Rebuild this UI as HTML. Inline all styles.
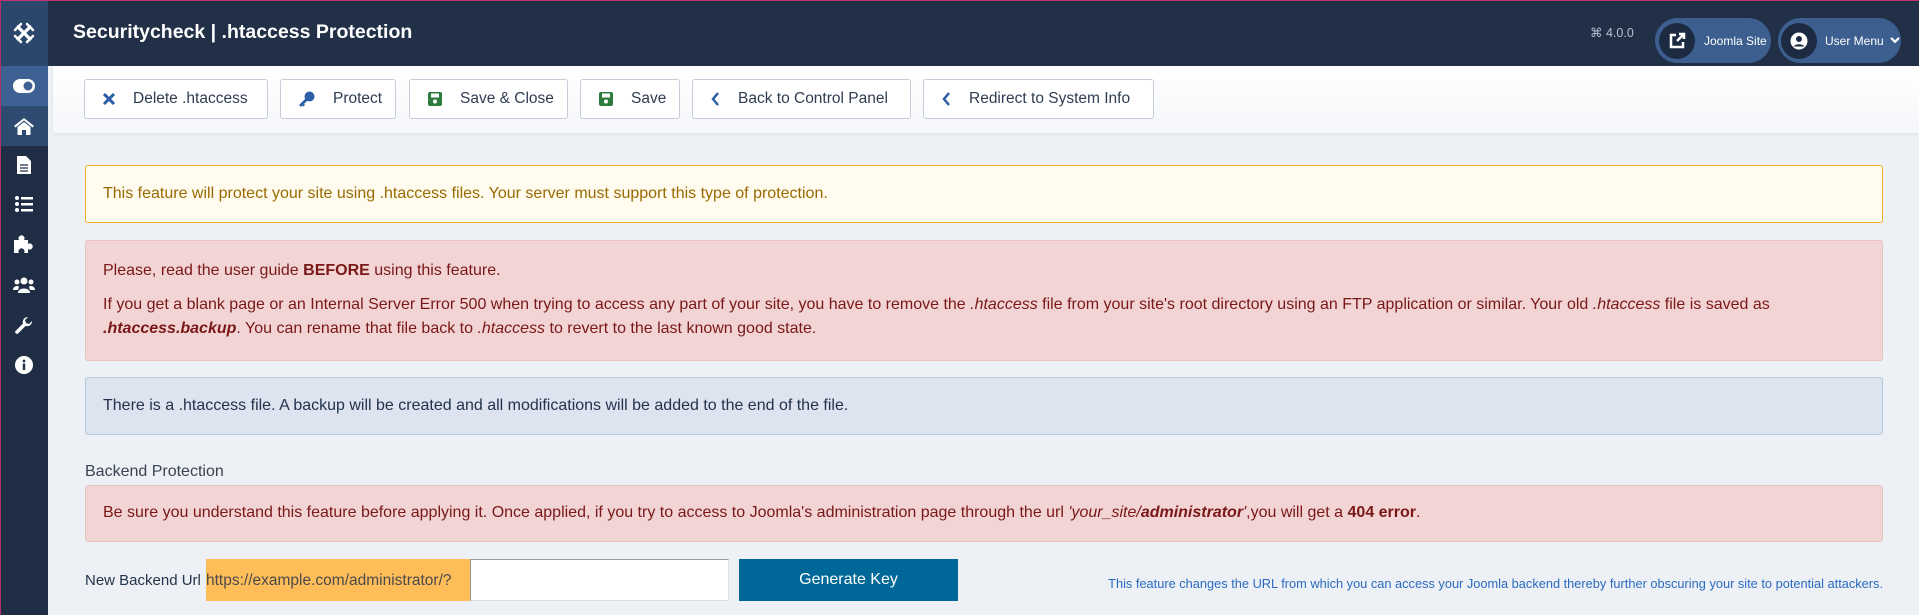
<!DOCTYPE html>
<html><head><meta charset="utf-8">
<style>
*{box-sizing:border-box;margin:0;padding:0}
body{width:1919px;height:615px;overflow:hidden;background:#edf1f6;font-family:"Liberation Sans",sans-serif;position:relative;color:#22334b}
.topline{position:absolute;left:0;top:0;width:1919px;height:1px;background:#c2326d;z-index:5}
.leftline{position:absolute;left:0;top:0;width:1px;height:615px;background:#b0306a;z-index:5}
.header{position:absolute;left:0;top:0;width:1919px;height:66px;background:#212f47}
.logo{position:absolute;left:0;top:0;width:48px;height:66px;background:#2c476c}
.title{position:absolute;left:73px;top:21px;color:#fff;font-size:19.5px;font-weight:bold}
.side{position:absolute;left:0;top:66px;width:48px;height:549px;background:#1f2d45}
.srow{position:absolute;left:0;width:48px;height:40px;display:flex;align-items:center;justify-content:center}
.toolbar{position:absolute;left:53px;top:66px;width:1866px;height:67px;background:linear-gradient(#fff,#f5f7fa);box-shadow:0 2px 4px rgba(0,0,0,.05)}
.btn{position:absolute;top:79px;height:40px;background:#fff;border:1px solid #c6cdd8;border-radius:3px;font-size:15.5px;color:#2f3d52;display:flex;align-items:center;padding-left:18px;white-space:nowrap}
.btn svg{margin-right:18px}
.box{position:absolute;left:85px;width:1798px;border:1px solid;border-radius:3px;font-size:16px}
.pill{position:absolute;top:18px;height:45px;border-radius:23px;background:#3c5f90;color:#fff;font-size:12px;display:flex;align-items:center;white-space:nowrap}
.pill .ic{width:36px;height:36px;border-radius:50%;background:#1d2b42;margin-left:4px;margin-right:9px;display:flex;align-items:center;justify-content:center}
</style></head><body>
<div class="header"></div>
<div class="logo"><svg style="position:absolute;left:12px;top:21px" width="24" height="24" viewBox="0 0 24 24" fill="none" stroke="#fff" stroke-width="3.2" stroke-linecap="round"><path d="M6 6 L18 18 M18 6 L6 18"/><path d="M3 9 L9 3 M15 3 L21 9 M21 15 L15 21 M9 21 L3 15" stroke-width="2.5"/></svg></div>
<div class="title">Securitycheck | .htaccess Protection</div>
<div style="position:absolute;left:1590px;top:25px;color:#b8c2d2;font-size:12.5px;white-space:nowrap">&#x2318; 4.0.0</div>
<div class="pill" style="left:1655px;width:116px"><div class="ic"><svg width="18" height="18" viewBox="0 0 18 18" fill="none" stroke="#fff" stroke-width="2.5"><path d="M8 3H3v12h12v-5"/><path d="M9 9l7-7M11 2h5v5"/></svg></div>Joomla Site</div>
<div class="pill" style="left:1778px;width:123px"><div class="ic" style="margin-left:3px;margin-right:8px"><svg width="18" height="18" viewBox="0 0 18 18"><circle cx="9" cy="9" r="8.5" fill="#fff"/><circle cx="9" cy="7" r="3" fill="#1d2b42"/><path d="M3.5 14.5c2-3 9-3 11 0" fill="#1d2b42"/></svg></div>User Menu<svg style="margin-left:6px" width="10" height="7" viewBox="0 0 11 8" fill="none" stroke="#fff" stroke-width="2.5"><path d="M1 1l4.5 4.5L10 1"/></svg></div>
<div class="side">
<div class="srow" style="top:0;background:#3e6194"><svg width="22" height="14"><rect x="0" y="0" width="22" height="14" rx="7" fill="#fff"/><circle cx="15" cy="7" r="4.5" fill="#3e6194"/></svg></div>
<div class="srow" style="top:40px;background:#2d4a70"><svg width="20" height="18" viewBox="0 0 20 18" fill="#fff"><path d="M10 1L0 9l1.5 1.5L10 3.5l8.5 7L20 9z"/><path d="M3.5 10L10 5l6.5 5v8h-4.5v-5h-4v5h-4.5z"/></svg></div>
<div class="srow" style="top:79px"><svg width="14" height="18" viewBox="0 0 14 18" fill="#fff"><path d="M0 0h9l5 5v13H0z"/><path d="M3 9h8M3 12h8M3 15h8" stroke="#1f2d45" stroke-width="1.3"/></svg></div>
<div class="srow" style="top:118px"><svg width="18" height="16" viewBox="0 0 18 16" fill="#fff"><circle cx="2" cy="2" r="2"/><circle cx="2" cy="8" r="2"/><circle cx="2" cy="14" r="2"/><rect x="6" y="1" width="12" height="2.5"/><rect x="6" y="7" width="12" height="2.5"/><rect x="6" y="13" width="12" height="2.5"/></svg></div>
<div class="srow" style="top:158px"><svg width="20" height="18" viewBox="0 0 20 18" fill="#fff"><path d="M0 5h5a3 3 0 1 1 5 0h4v4a3 3 0 1 1 0 5v4H10a3 3 0 1 0-5 0H0z"/></svg></div>
<div class="srow" style="top:199px"><svg width="22" height="16" viewBox="0 0 22 16" fill="#fff"><circle cx="11" cy="4" r="3.5"/><circle cx="4" cy="5" r="2.5"/><circle cx="18" cy="5" r="2.5"/><path d="M5 16c0-6 12-6 12 0z"/><path d="M0 13c0-4 5-5 6-3l-1 3z M22 13c0-4-5-5-6-3l1 3z"/></svg></div>
<div class="srow" style="top:240px"><svg width="18" height="18" viewBox="0 0 18 18" fill="#fff"><path d="M17 4a5 5 0 0 1-6.5 5L3 16.5A1.8 1.8 0 0 1 .5 14L8 6.5A5 5 0 0 1 13 0l-3 3 1 3 3 1z"/></svg></div>
<div class="srow" style="top:279px"><svg width="18" height="18" viewBox="0 0 18 18"><circle cx="9" cy="9" r="9" fill="#fff"/><rect x="7.8" y="7.5" width="2.4" height="6.5" fill="#1f2d45"/><circle cx="9" cy="5" r="1.4" fill="#1f2d45"/></svg></div>
</div>
<div class="toolbar"></div>
<div class="btn" style="left:84px;width:184px"><svg width="12" height="12" viewBox="0 0 12 12" stroke="#2d5fa8" stroke-width="3"><path d="M1 1l10 10M11 1L1 11"/></svg>Delete .htaccess</div>
<div class="btn" style="left:280px;width:116px"><svg width="16" height="16" viewBox="0 0 16 16" fill="#2d5fa8"><circle cx="10.5" cy="5.5" r="5"/><path d="M7 7L0 14l2 2 1.5-1.5 1 1 1.5-1.5-1-1L9 9z"/></svg>Protect</div>
<div class="btn" style="left:409px;width:159px"><svg width="14" height="14" viewBox="0 0 14 14"><rect width="14" height="14" rx="2" fill="#2f7d3e"/><rect x="3" y="1.5" width="8" height="4" fill="#fff"/><circle cx="7" cy="9.5" r="2" fill="#fff"/></svg>Save &amp; Close</div>
<div class="btn" style="left:580px;width:100px"><svg width="14" height="14" viewBox="0 0 14 14"><rect width="14" height="14" rx="2" fill="#2f7d3e"/><rect x="3" y="1.5" width="8" height="4" fill="#fff"/><circle cx="7" cy="9.5" r="2" fill="#fff"/></svg>Save</div>
<div class="btn" style="left:692px;width:219px"><svg width="9" height="14" viewBox="0 0 9 14" fill="none" stroke="#2d5fa8" stroke-width="2.5"><path d="M7 1L2 7l5 6"/></svg>Back to Control Panel</div>
<div class="btn" style="left:923px;width:231px"><svg width="9" height="14" viewBox="0 0 9 14" fill="none" stroke="#2d5fa8" stroke-width="2.5"><path d="M7 1L2 7l5 6"/></svg>Redirect to System Info</div>

<div class="box" style="top:165px;height:58px;background:#fffbef;border-color:#f1b51c;color:#9a6a00;padding:19px 17px">This feature will protect your site using .htaccess files. Your server must support this type of protection.</div>
<div class="box" style="top:240px;height:121px;background:#f2d4d5;border-color:#ecbfc0;color:#7a1717;padding:18px 17px;line-height:24px">Please, read the user guide <b>BEFORE</b> using this feature.<div style="margin-top:10px">If you get a blank page or an Internal Server Error 500 when trying to access any part of your site, you have to remove the <i>.htaccess</i> file from your site's root directory using an FTP application or similar. Your old <i>.htaccess</i> file is saved as<br><b><i>.htaccess.backup</i></b>. You can rename that file back to <i>.htaccess</i> to revert to the last known good state.</div></div>
<div class="box" style="top:377px;height:58px;background:#dde3ef;border-color:#b9c8df;color:#22334b;padding:19px 17px">There is a .htaccess file. A backup will be created and all modifications will be added to the end of the file.</div>
<div style="position:absolute;left:85px;top:463px;font-size:16px;color:#3a4352">Backend Protection</div>
<div class="box" style="top:485px;height:57px;background:#f2d4d5;border-color:#ecbfc0;color:#7a1717;padding:18px 17px">Be sure you understand this feature before applying it. Once applied, if you try to access to Joomla's administration page through the url <i>'your_site/<b>administrator</b>'</i>,you will get a <b>404 error</b>.</div>
<div style="position:absolute;left:85px;top:572px;font-size:15px;color:#22334b;white-space:nowrap">New Backend Url</div>
<div style="position:absolute;left:206px;top:559px;width:264px;height:42px;background:#ffbd5a;font-size:15.5px;color:#4a4a4a;padding-top:13px;white-space:nowrap;overflow:hidden">https://example.com/administrator/?</div>
<div style="position:absolute;left:470px;top:559px;width:259px;height:42px;background:#fff;border:1px solid #999;border-bottom-color:#ddd;border-right-color:#ddd"></div>
<div style="position:absolute;left:739px;top:559px;width:219px;height:42px;background:#006898;color:#fff;font-size:16px;display:flex;align-items:center;justify-content:center">Generate Key</div>
<div style="position:absolute;right:36px;top:576px;font-size:12.8px;color:#2a6ac0;white-space:nowrap">This feature changes the URL from which you can access your Joomla backend thereby further obscuring your site to potential attackers.</div>
<div class="topline"></div><div class="leftline"></div>
</body></html>
